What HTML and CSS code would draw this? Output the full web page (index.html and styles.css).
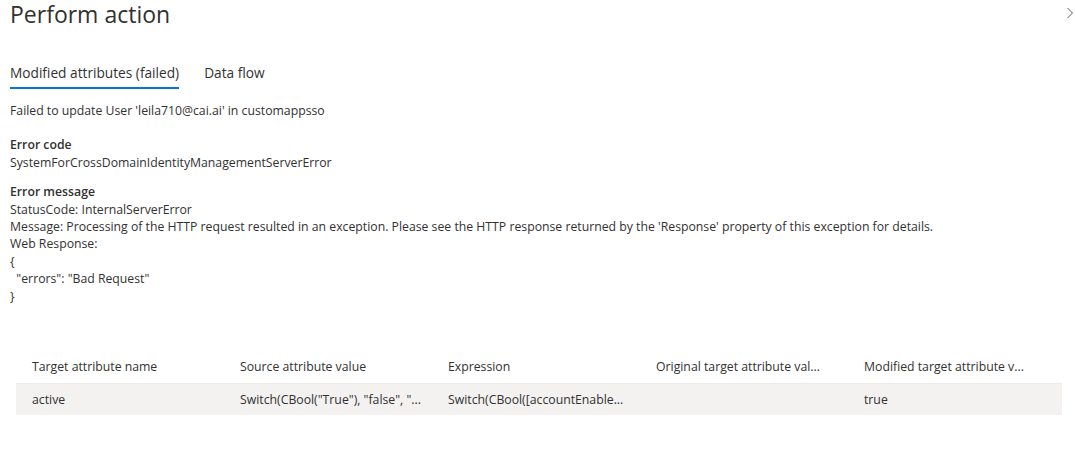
FILE: index.html
```html
<!DOCTYPE html>
<html lang="en">
<head>
  <meta charset="UTF-8" />
  <meta name="viewport" content="width=device-width, initial-scale=1.0" />
  <title>Perform action</title>
  <link rel="stylesheet" href="styles.css">
</head>
<body>
  <div id="panel">
    <div class="panel-header">
      <h1>Perform action</h1>
      <button class="close-btn" aria-label="Collapse">
        <svg width="8" height="12" viewBox="0 0 8 12"><path d="M1.5 1 L6.5 6 L1.5 11" fill="none" stroke="#605e5c" stroke-width="1"/></svg>
      </button>
    </div>

    <!-- tabs -->
    <div class="tabs">
      <span class="tab active">Modified attributes (failed)</span>
      <span class="tab">Data flow</span>
    </div>

    <p class="summary">Failed to update User 'leila710@cai.ai' in customappsso</p>

    <div class="field">
      <div class="label">Error code</div>
      <div class="value">SystemForCrossDomainIdentityManagementServerError</div>
    </div>

    <div class="field">
      <div class="label">Error message</div>
      <div class="value">
        StatusCode: InternalServerError<br>
        Message: Processing of the HTTP request resulted in an exception. Please see the HTTP response returned by the 'Response' property of this exception for details.<br>
        Web Response:<br>
        {<br>
        &nbsp;&nbsp;"errors": "Bad Request"<br>
        }
      </div>
    </div>

    <!-- attribute table -->
    <table class="attr-table">
      <thead>
        <tr>
          <th>Target attribute name</th>
          <th>Source attribute value</th>
          <th>Expression</th>
          <th>Original target attribute val...</th>
          <th>Modified target attribute v...</th>
        </tr>
      </thead>
      <tbody>
        <tr>
          <td>active</td>
          <td>Switch(CBool("True"), "false", "...</td>
          <td>Switch(CBool([accountEnable...</td>
          <td></td>
          <td>true</td>
        </tr>
      </tbody>
    </table>
  </div>
</body>
</html>
```

FILE: styles.css
```css
body {
  font-family: "Open Sans", "Noto Sans", sans-serif;
  color: #323130;
  background: #fff;
  margin: 0;
  font-size: 12.25px;
}
#panel {
  padding: 0 0 0 10px;
}
.panel-header {
  display: flex;
  justify-content: space-between;
  align-items: center;
  height: 28px;
}
h1 {
  font-size: 23px;
  font-weight: 400;
  margin: 0;
  line-height: 26px;
}
.close-btn {
  border: none;
  background: none;
  padding: 0;
  margin-right: 1px;
  cursor: pointer;
}
.tabs {
  display: flex;
  gap: 25px;
  margin-top: 31px;
}
.tab {
  font-size: 13.7px;
  line-height: 28px;
  border-bottom: 2px solid transparent;
}
.tab.active {
  border-bottom-color: #0078d4;
}
.summary {
  margin: 13px 0 17px 0;
  line-height: 17.4px;
}
.field {
  margin-bottom: 12px;
  line-height: 17.4px;
}
.label {
  font-weight: 600;
}
.attr-table {
  margin: 46px 0 0 6px;
  border-collapse: collapse;
  table-layout: fixed;
  width: 1046px;
}
.attr-table th,
.attr-table td {
  box-sizing: border-box;
  text-align: left;
  padding: 0 16px;
  height: 32px;
  white-space: nowrap;
  overflow: hidden;
}
.attr-table th:not(:last-child) {
  width: 208px;
}
.attr-table th {
  font-weight: 400;
  border-bottom: 1px solid #edebe9;
}
.attr-table tbody tr {
  background: #f3f2f1;
}
```
